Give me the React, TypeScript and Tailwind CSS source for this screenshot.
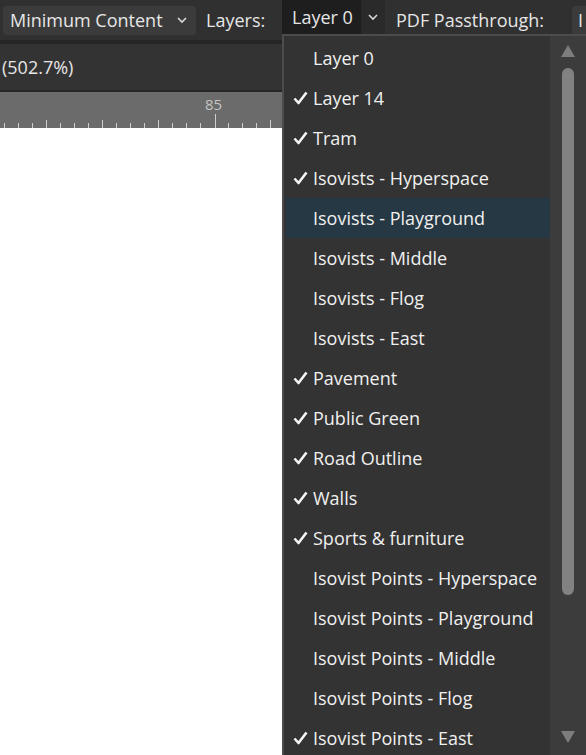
import React from 'react';

const LAYERS: { name: string; checked: boolean }[] = [
  { name: 'Layer 0', checked: false },
  { name: 'Layer 14', checked: true },
  { name: 'Tram', checked: true },
  { name: 'Isovists - Hyperspace', checked: true },
  { name: 'Isovists - Playground', checked: false },
  { name: 'Isovists - Middle', checked: false },
  { name: 'Isovists - Flog', checked: false },
  { name: 'Isovists - East', checked: false },
  { name: 'Pavement', checked: true },
  { name: 'Public Green', checked: true },
  { name: 'Road Outline', checked: true },
  { name: 'Walls', checked: true },
  { name: 'Sports & furniture', checked: true },
  { name: 'Isovist Points - Hyperspace', checked: false },
  { name: 'Isovist Points - Playground', checked: false },
  { name: 'Isovist Points - Middle', checked: false },
  { name: 'Isovist Points - Flog', checked: false },
  { name: 'Isovist Points - East', checked: true },
];

const HOVERED = 'Isovists - Playground';

function Chevron() {
  return (
    <svg width="12" height="8" viewBox="0 0 12 8" fill="none">
      <path d="M2 2 L6 6 L10 2" stroke="#d8d8d8" strokeWidth="1.6" />
    </svg>
  );
}

function Check() {
  return (
    <svg width="15" height="14" viewBox="0 0 15 14" fill="none">
      <path d="M1.5 7.5 L5.5 12 L13.5 1.5" stroke="#f4f4f4" strokeWidth="2.6" strokeLinejoin="round" />
    </svg>
  );
}

function Ruler() {
  const ticks = Array.from({ length: 21 }, (_, i) => i);
  return (
    <div className="relative h-[36px] bg-[#6b6b6b]">
      <span className="absolute left-[205px] top-[1px] text-[15px] text-[#c4c4c4]">85</span>
      {ticks.map(i => {
        const x = 4 + i * 14;
        const major = i === 15;
        const mid = (i - 3) % 4 === 0;
        return (
          <div
            key={i}
            className="absolute bottom-0 w-px bg-[#cfcfcf]"
            style={{ left: major ? 215 : x, height: major ? 14 : mid ? 8 : 5 }}
          />
        );
      })}
    </div>
  );
}

export default function App() {
  return (
    <div
      className="relative w-[586px] h-[755px] overflow-hidden bg-white text-[#e6e6e6]"
      style={{ fontFamily: '"Open Sans", "Noto Sans", sans-serif' }}
    >
      {/* Toolbar */}
      <div className="flex items-center h-[40px] bg-[#303030] text-[18px]">
        <div className="ml-[3px] w-[193px] flex items-center justify-between h-[29px] pl-[7px] pr-[8px] rounded-[3px] bg-[#3b3b3b]">
          <span className="whitespace-nowrap">Minimum Content</span>
          <Chevron />
        </div>
        <span className="ml-[10px] w-[76px]">Layers:</span>
        <div className="flex self-start h-[34px] w-[103px] bg-[#1e1e1e] rounded-br-[3px]">
          <span className="flex-1 pl-[10px] pt-[4px] whitespace-nowrap">Layer 0</span>
          <div className="w-[24px] flex items-center justify-center bg-[#2a2a2a] rounded-br-[3px]">
            <Chevron />
          </div>
        </div>
        <span className="ml-[11px] w-[176px] whitespace-nowrap">PDF Passthrough:</span>
        <div className="h-[29px] flex-1 rounded-l-[3px] bg-[#3b3b3b] pl-[6px] leading-[29px]">I</div>
      </div>
      <div className="h-[4px] bg-[#262626]" />

      {/* Zoom bar */}
      <div className="flex items-center h-[46px] bg-[#333333] text-[18px] pl-[2px]">
        (502.7%)
      </div>
      <div className="h-[2px] bg-[#262626]" />

      <Ruler />

      {/* Layers dropdown popup */}
      <div className="absolute left-[282px] top-[34px] w-[304px] h-[721px] flex bg-[#333333] border-l-2 border-t-2 border-[#4c4c4c] text-[18px]">
        <div className="flex-1 pt-[2px] pl-[2px]">
          {LAYERS.map(l => (
            <div
              key={l.name}
              className={`flex items-center h-[40px] ${l.name === HOVERED ? 'bg-[#263843]' : ''}`}
            >
              <span className="w-[27px] pl-[7px] flex items-center">{l.checked ? <Check /> : null}</span>
              <span className="text-[#f0f0f0] whitespace-nowrap">{l.name}</span>
            </div>
          ))}
        </div>
        <div className="w-[36px] flex flex-col items-center bg-[#3c3c3c]">
          <svg width="14" height="12" viewBox="0 0 14 12" className="mt-[9px]">
            <path d="M7 0 L14 12 L0 12 Z" fill="#7d7d7d" />
          </svg>
          <div className="mt-[11px] w-[12px] h-[527px] rounded-full bg-[#828282]" />
          <div className="flex-1" />
          <svg width="14" height="12" viewBox="0 0 14 12" className="mb-[12px]">
            <path d="M0 0 L14 0 L7 12 Z" fill="#7d7d7d" />
          </svg>
        </div>
      </div>
    </div>
  );
}
